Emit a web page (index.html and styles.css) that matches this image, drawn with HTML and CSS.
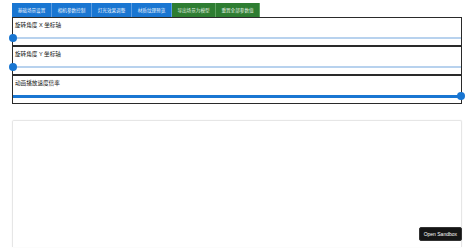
FILE: index.html
```html
<!DOCTYPE html>
<html lang="zh">
<head>
    <meta charset="UTF-8">
    <meta name="viewport" content="width=device-width, initial-scale=1.0">
    <title>场景控制</title>
    <link rel="stylesheet" href="styles.css">
</head>
<body>
    <div id="app">
        <div class="tabs">
            <div class="tab">基础场景设置</div>
            <div class="tab">相机参数控制</div>
            <div class="tab">灯光效果调整</div>
            <div class="tab">材质纹理预览</div>
            <div class="tab green">导出场景为模型</div>
            <div class="tab green">重置全部参数值</div>
        </div>

        <div class="panel">
            <div class="label">旋转角度 X 坐标轴</div>
            <div class="slider">
                <div class="rail"></div>
                <div class="thumb" style="left: 0%"></div>
            </div>
        </div>
        <div class="panel">
            <div class="label">旋转角度 Y 坐标轴</div>
            <div class="slider">
                <div class="rail"></div>
                <div class="thumb" style="left: 0%"></div>
            </div>
        </div>
        <div class="panel">
            <div class="label">动画播放速度倍率</div>
            <div class="slider">
                <div class="rail"></div>
                <div class="fill" style="width: 100%"></div>
                <div class="thumb" style="left: 100%"></div>
            </div>
        </div>

        <div class="canvas-box"></div>
    </div>

    <button class="sandbox-btn">Open Sandbox</button>
</body>
</html>
```

FILE: styles.css
```css
/* Estilos generales */
body {
    margin: 0;
    padding: 0;
    background-color: #ffffff;
    font-family: "Liberation Sans", "Noto Sans CJK SC", sans-serif;
    overflow: hidden;
    height: 248px;
}

#app {
    padding: 3px 12px 0 12px;
}

.tabs {
    display: flex;
    height: 14px;
}

.tab {
    width: 40px;
    background-color: #1976d2;
    color: #eef5fd;
    font-size: 4.6px;
    display: flex;
    align-items: center;
    justify-content: center;
    border-right: 1px solid #5b9be0;
    box-sizing: border-box;
    white-space: nowrap;
}

.tab.green {
    width: 44px;
    background-color: #2e7d32;
    border-right: 1px solid #5fa362;
    color: #e3f0e3;
}

.panel {
    border: 1.5px solid #2a2a2a;
    height: 29px;
    box-sizing: border-box;
    padding: 3px 2px 0 2px;
}

.label {
    font-size: 5.6px;
    color: #111;
    height: 9px;
    line-height: 8px;
}

.slider {
    position: relative;
    height: 14px;
    margin: 0 -2px;
}

.rail {
    position: absolute;
    left: 0;
    right: 0;
    top: 7px;
    height: 2px;
    background-color: #b8d2ee;
}

.fill {
    position: absolute;
    left: 0;
    top: 6.5px;
    height: 3px;
    background-color: #1976d2;
}

.thumb {
    position: absolute;
    top: 4px;
    width: 8px;
    height: 8px;
    margin-left: -4px;
    border-radius: 50%;
    background-color: #1976d2;
}

.canvas-box {
    margin-top: 16px;
    height: 126px;
    border: 1px solid #e6e6e6;
    border-bottom: none;
    border-radius: 2px 2px 0 0;
    box-shadow: 0 0 2px rgba(0, 0, 0, 0.06);
}

.sandbox-btn {
    position: fixed;
    right: 12px;
    bottom: 7px;
    background-color: #151515;
    color: #ffffff;
    border: 1px solid #333;
    border-radius: 2px;
    font-family: "Liberation Sans", sans-serif;
    font-size: 5px;
    padding: 0 4px;
    height: 14px;
    line-height: 12px;
    white-space: nowrap;
    cursor: pointer;
}
```
